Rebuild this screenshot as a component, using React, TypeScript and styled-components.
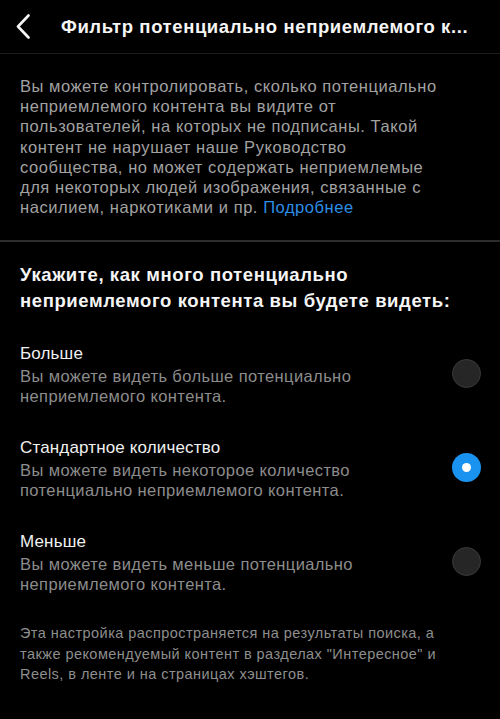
import React, { useState } from "react";
import styled, { createGlobalStyle } from "styled-components";

const GlobalStyle = createGlobalStyle`
  html, body {
    margin: 0;
    padding: 0;
    background: #000;
  }
  body {
    font-family: "Liberation Sans", Arial, sans-serif;
    -webkit-font-smoothing: antialiased;
  }
`;

const Page = styled.div`
  width: 500px;
  min-height: 719px;
  background: #000;
  color: #f5f5f5;
  display: flex;
  flex-direction: column;
`;

const Header = styled.header`
  height: 53px;
  display: flex;
  align-items: center;
  border-bottom: 1px solid #1c1c1c;
  padding: 0 16px;
  gap: 31px;
`;

const BackButton = styled.button`
  width: 14px;
  height: 26px;
  padding: 0;
  background: none;
  border: none;
  display: flex;
  align-items: center;
  cursor: pointer;
`;

const Title = styled.h1`
  margin: 0;
  font-size: 18.5px;
  font-weight: 700;
  color: #f5f5f5;
  white-space: nowrap;
  letter-spacing: 0.6px;
`;

const Intro = styled.p`
  margin: 0;
  padding: 22px 20px 23px;
  font-size: 16.5px;
  line-height: 20.2px;
  letter-spacing: 0.55px;
  color: #a2a2a2;
  border-bottom: 2px solid #2c2c2c;
`;

const Link = styled.a`
  color: #2d8ee6;
  text-decoration: none;
`;

const Question = styled.h2`
  margin: 0;
  padding: 20px 20px 28px;
  font-size: 18.5px;
  line-height: 26px;
  font-weight: 700;
  letter-spacing: 0.6px;
  color: #f5f5f5;
`;

const Options = styled.div`
  display: flex;
  flex-direction: column;
  gap: 30px;
`;

const Option = styled.label`
  display: flex;
  align-items: center;
  justify-content: space-between;
  padding: 0 19px 0 20px;
  cursor: pointer;
`;

const OptionText = styled.div`
  display: flex;
  flex-direction: column;
`;

const OptionTitle = styled.span`
  font-size: 17px;
  line-height: 24px;
  letter-spacing: 0.15px;
  color: #f0f0f0;
`;

const OptionDesc = styled.span`
  font-size: 16.5px;
  line-height: 20px;
  letter-spacing: 0.4px;
  color: #8c8c8c;
`;

const Radio = styled.span<{ $checked: boolean }>`
  width: 29px;
  height: 29px;
  margin-top: -2px;
  border-radius: 50%;
  box-sizing: border-box;
  flex-shrink: 0;
  display: flex;
  align-items: center;
  justify-content: center;
  background: ${(p) => (p.$checked ? "#1a93f0" : "#262626")};
  border: ${(p) => (p.$checked ? "none" : "1px solid #3a3a3a")};

  &::after {
    content: "";
    display: ${(p) => (p.$checked ? "block" : "none")};
    width: 9px;
    height: 9px;
    border-radius: 50%;
    background: #fff;
  }
`;

const Footnote = styled.p`
  margin: 0;
  padding: 29px 20px 0;
  font-size: 14.5px;
  line-height: 20.5px;
  letter-spacing: 0.45px;
  color: #8e8e8e;
`;

const options = [
  {
    id: "more",
    title: "Больше",
    lines: ["Вы можете видеть больше потенциально", "неприемлемого контента."],
  },
  {
    id: "standard",
    title: "Стандартное количество",
    lines: ["Вы можете видеть некоторое количество", "потенциально неприемлемого контента."],
  },
  {
    id: "less",
    title: "Меньше",
    lines: ["Вы можете видеть меньше потенциально", "неприемлемого контента."],
  },
];

const App = () => {
  const [selected, setSelected] = useState("standard");

  return (
    <Page>
      <GlobalStyle />
      <Header>
        <BackButton aria-label="Назад">
          <svg width="14" height="25" viewBox="0 0 14 25" fill="none">
            <path
              d="M12.5 1.5 L2 12.5 L12.5 23.5"
              stroke="#f5f5f5"
              strokeWidth="2.6"
              strokeLinecap="round"
              strokeLinejoin="round"
            />
          </svg>
        </BackButton>
        <Title>Фильтр потенциально неприемлемого к...</Title>
      </Header>

      <Intro>
        Вы можете контролировать, сколько потенциально
        <br />
        неприемлемого контента вы видите от
        <br />
        пользователей, на которых не подписаны. Такой
        <br />
        контент не нарушает наше Руководство
        <br />
        сообщества, но может содержать неприемлемые
        <br />
        для некоторых людей изображения, связанные с
        <br />
        насилием, наркотиками и пр. <Link href="#">Подробнее</Link>
      </Intro>

      <Question>
        Укажите, как много потенциально
        <br />
        неприемлемого контента вы будете видеть:
      </Question>

      <Options>
        {options.map((o) => (
          <Option key={o.id} onClick={() => setSelected(o.id)}>
            <OptionText>
              <OptionTitle>{o.title}</OptionTitle>
              {o.lines.map((l) => (
                <OptionDesc key={l}>{l}</OptionDesc>
              ))}
            </OptionText>
            <Radio $checked={selected === o.id} />
          </Option>
        ))}
      </Options>

      <Footnote>
        Эта настройка распространяется на результаты поиска, а
        <br />
        также рекомендуемый контент в разделах "Интересное" и
        <br />
        Reels, в ленте и на страницах хэштегов.
      </Footnote>
    </Page>
  );
};

export default App;
